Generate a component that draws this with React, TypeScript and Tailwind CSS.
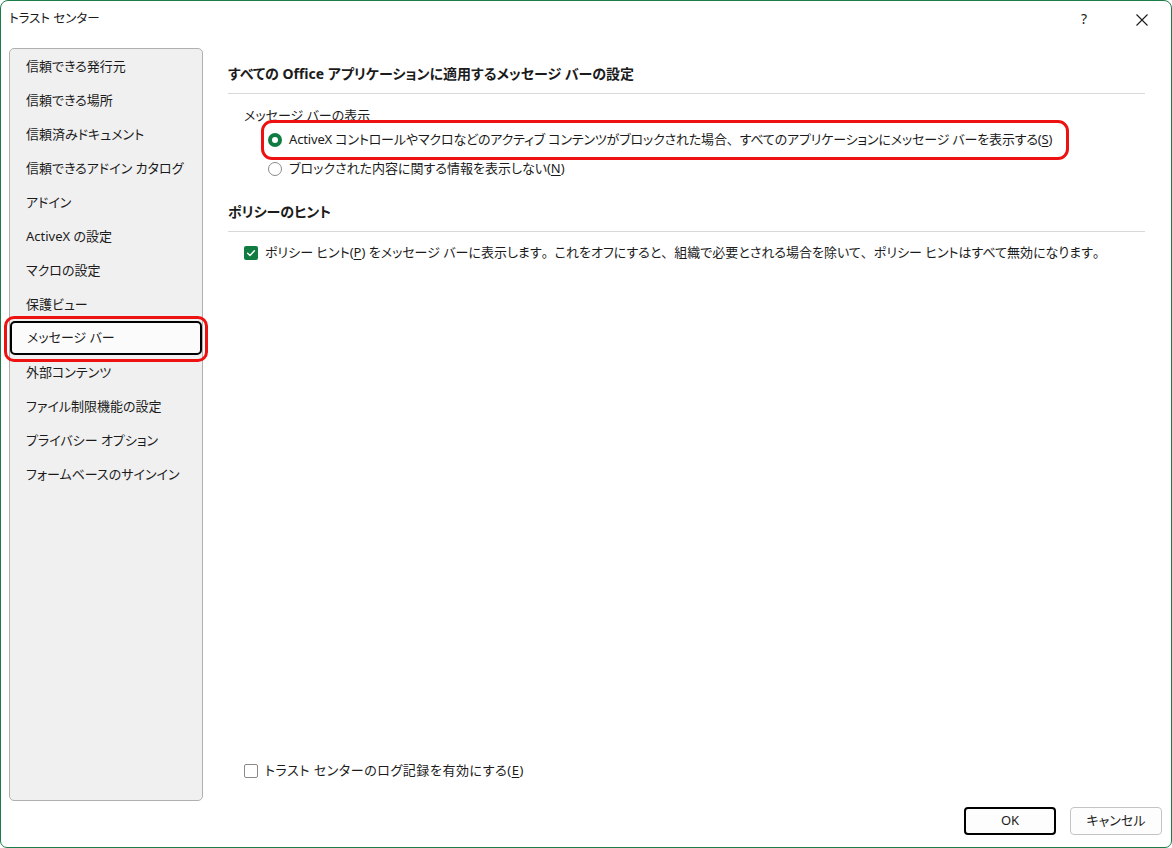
import React from "react";

const navItems = [
  "信頼できる発行元",
  "信頼できる場所",
  "信頼済みドキュメント",
  "信頼できるアドイン カタログ",
  "アドイン",
  "ActiveX の設定",
  "マクロの設定",
  "保護ビュー",
  "メッセージ バー",
  "外部コンテンツ",
  "ファイル制限機能の設定",
  "プライバシー オプション",
  "フォームベースのサインイン",
];

const SELECTED = 8;

function P({ c }: { c: string }) {
  return <span className="[font-feature-settings:normal]">{c}</span>;
}

function Check() {
  return (
    <svg width="10" height="10" viewBox="0 0 10 10" fill="none">
      <path d="M1.6 5.2 L4 7.4 L8.4 2.8" stroke="#ffffff" strokeWidth="1.4" strokeLinecap="round" strokeLinejoin="round" />
    </svg>
  );
}

export default function App() {
  return (
    <div className="w-[1172px] h-[848px] bg-white font-['Noto_Sans','Noto_Sans_CJK_JP',sans-serif] [font-feature-settings:'palt'] text-[#1b1b1b]">
      <div className="w-full h-full border border-[#1b7d47] rounded-t-[8px] rounded-b-[7px] flex flex-col overflow-hidden">
        {/* title bar */}
        <div className="h-[47px] flex items-start shrink-0">
          <div className="pl-[8px] pt-[9px] text-[12.5px] leading-[18px] text-[#1b1b1b]">トラスト センター</div>
          <div className="flex-1" />
          <div className="pt-[9px] text-[14px] leading-[18px] w-[20px] text-center mr-[42px]">?</div>
          <div className="pt-[13px] mr-[23px]">
            <svg width="12" height="12" viewBox="0 0 12 12">
              <path d="M0.5 0.5 L11.5 11.5 M11.5 0.5 L0.5 11.5" stroke="#1b1b1b" strokeWidth="1.1" />
            </svg>
          </div>
        </div>

        {/* body */}
        <div className="flex flex-1 min-h-0 pl-[8px] pr-[26px]">
          {/* nav */}
          <div className="w-[194px] h-[753px] shrink-0 bg-[#f0f0f0] border border-[#b0b0b0] rounded-[5px] pt-[1px]">
            {navItems.map((t, i) =>
              i === SELECTED ? (
                <div key={t} className="relative h-[34px] -mt-[1px]">
                  <div className="h-[34px] bg-[#fbfbfb] border-2 border-[#000000] rounded-[5px] flex items-center pl-[15px] text-[13px]">
                    {t}
                  </div>
                  <div className="absolute -left-[6px] -right-[6px] -top-[5px] -bottom-[7px] border-[3px] border-[#ee1111] rounded-[10px] pointer-events-none" />
                </div>
              ) : (
                <div key={t} className={`h-[34px] flex items-center pl-[16px] text-[13px] ${i === SELECTED + 1 ? "mt-[1px]" : ""} ${i > SELECTED ? "-mb-[0.1px]" : ""}`}>
                  {t}
                </div>
              )
            )}
          </div>

          {/* content */}
          <div className="flex-1 flex flex-col pl-[25px] h-[753px]">
            <div className="mt-[15px] h-[20px] flex items-center text-[14px] font-bold">
              すべての Office アプリケーションに適用するメッセージ バーの設定
            </div>
            <div className="mt-[10px] h-px bg-[#d9d9d9]" />
            <div className="mt-[12px] h-[20px] flex items-center pl-[16px] text-[13px]">メッセージ バーの表示</div>
            <div className="h-[28px] flex items-center pl-[40px]">
              <div className="relative flex items-center">
                <div className="w-[14px] h-[14px] rounded-full bg-[#107c41] flex items-center justify-center">
                  <div className="w-[6px] h-[6px] rounded-full bg-white" />
                </div>
                <div className="pl-[7px] text-[13px] tracking-[-0.16px]">
                  ActiveX コントロールやマクロなどのアクティブ コンテンツがブロックされた場合<P c="、" />すべてのアプリケーションにメッセージ バーを表示する(<span className="underline underline-offset-2">S</span>)
                </div>
                <div className="absolute -left-[7px] -right-[17px] -top-[10px] -bottom-[10px] border-[3.5px] border-[#ee1111] rounded-[11px] pointer-events-none" />
              </div>
            </div>
            <div className="h-[30px] flex items-center pl-[40px]">
              <div className="w-[14px] h-[14px] rounded-full border border-[#8a8a8a] bg-white" />
              <div className="pl-[7px] text-[13px]">
                ブロックされた内容に関する情報を表示しない(<span className="underline underline-offset-2">N</span>)
              </div>
            </div>
            <div className="mt-[17px] h-[20px] flex items-center text-[14px] font-bold">ポリシーのヒント</div>
            <div className="mt-[10px] h-px bg-[#d9d9d9]" />
            <div className="mt-[11px] h-[20px] flex items-center pl-[16px]">
              <div className="w-[14px] h-[14px] rounded-[2px] bg-[#107c41] flex items-center justify-center">
                <Check />
              </div>
              <div className="pl-[7px] text-[13px]">
                ポリシー ヒント(<span className="underline underline-offset-2">P</span>) をメッセージ バーに表示します<P c="。" />これをオフにすると<P c="、" />組織で必要とされる場合を除いて<P c="、" />ポリシー ヒントはすべて無効になります<P c="。" />
              </div>
            </div>
            <div className="flex-1" />
            <div className="mb-[20px] h-[20px] flex items-center pl-[16px]">
              <div className="w-[14px] h-[14px] rounded-[2px] border border-[#8a8a8a] bg-white" />
              <div className="pl-[7px] text-[13px] tracking-[0.55px]">
                トラスト センターのログ記録を有効にする(<span className="underline underline-offset-2">E</span>)
              </div>
            </div>
          </div>
        </div>

        {/* footer */}
        <div className="h-[46px] shrink-0 flex items-start justify-end pr-[9px] pt-[6px] gap-[14px]">
          <button className="w-[92px] h-[28px] border-2 border-black rounded-[4px] bg-[#fdfdfd] text-[13px] flex items-center justify-center">
            OK
          </button>
          <button className="w-[92px] h-[28px] border border-[#c4c4c4] rounded-[4px] bg-[#fdfdfd] text-[13px] flex items-center justify-center">
            キャンセル
          </button>
        </div>
      </div>
    </div>
  );
}
